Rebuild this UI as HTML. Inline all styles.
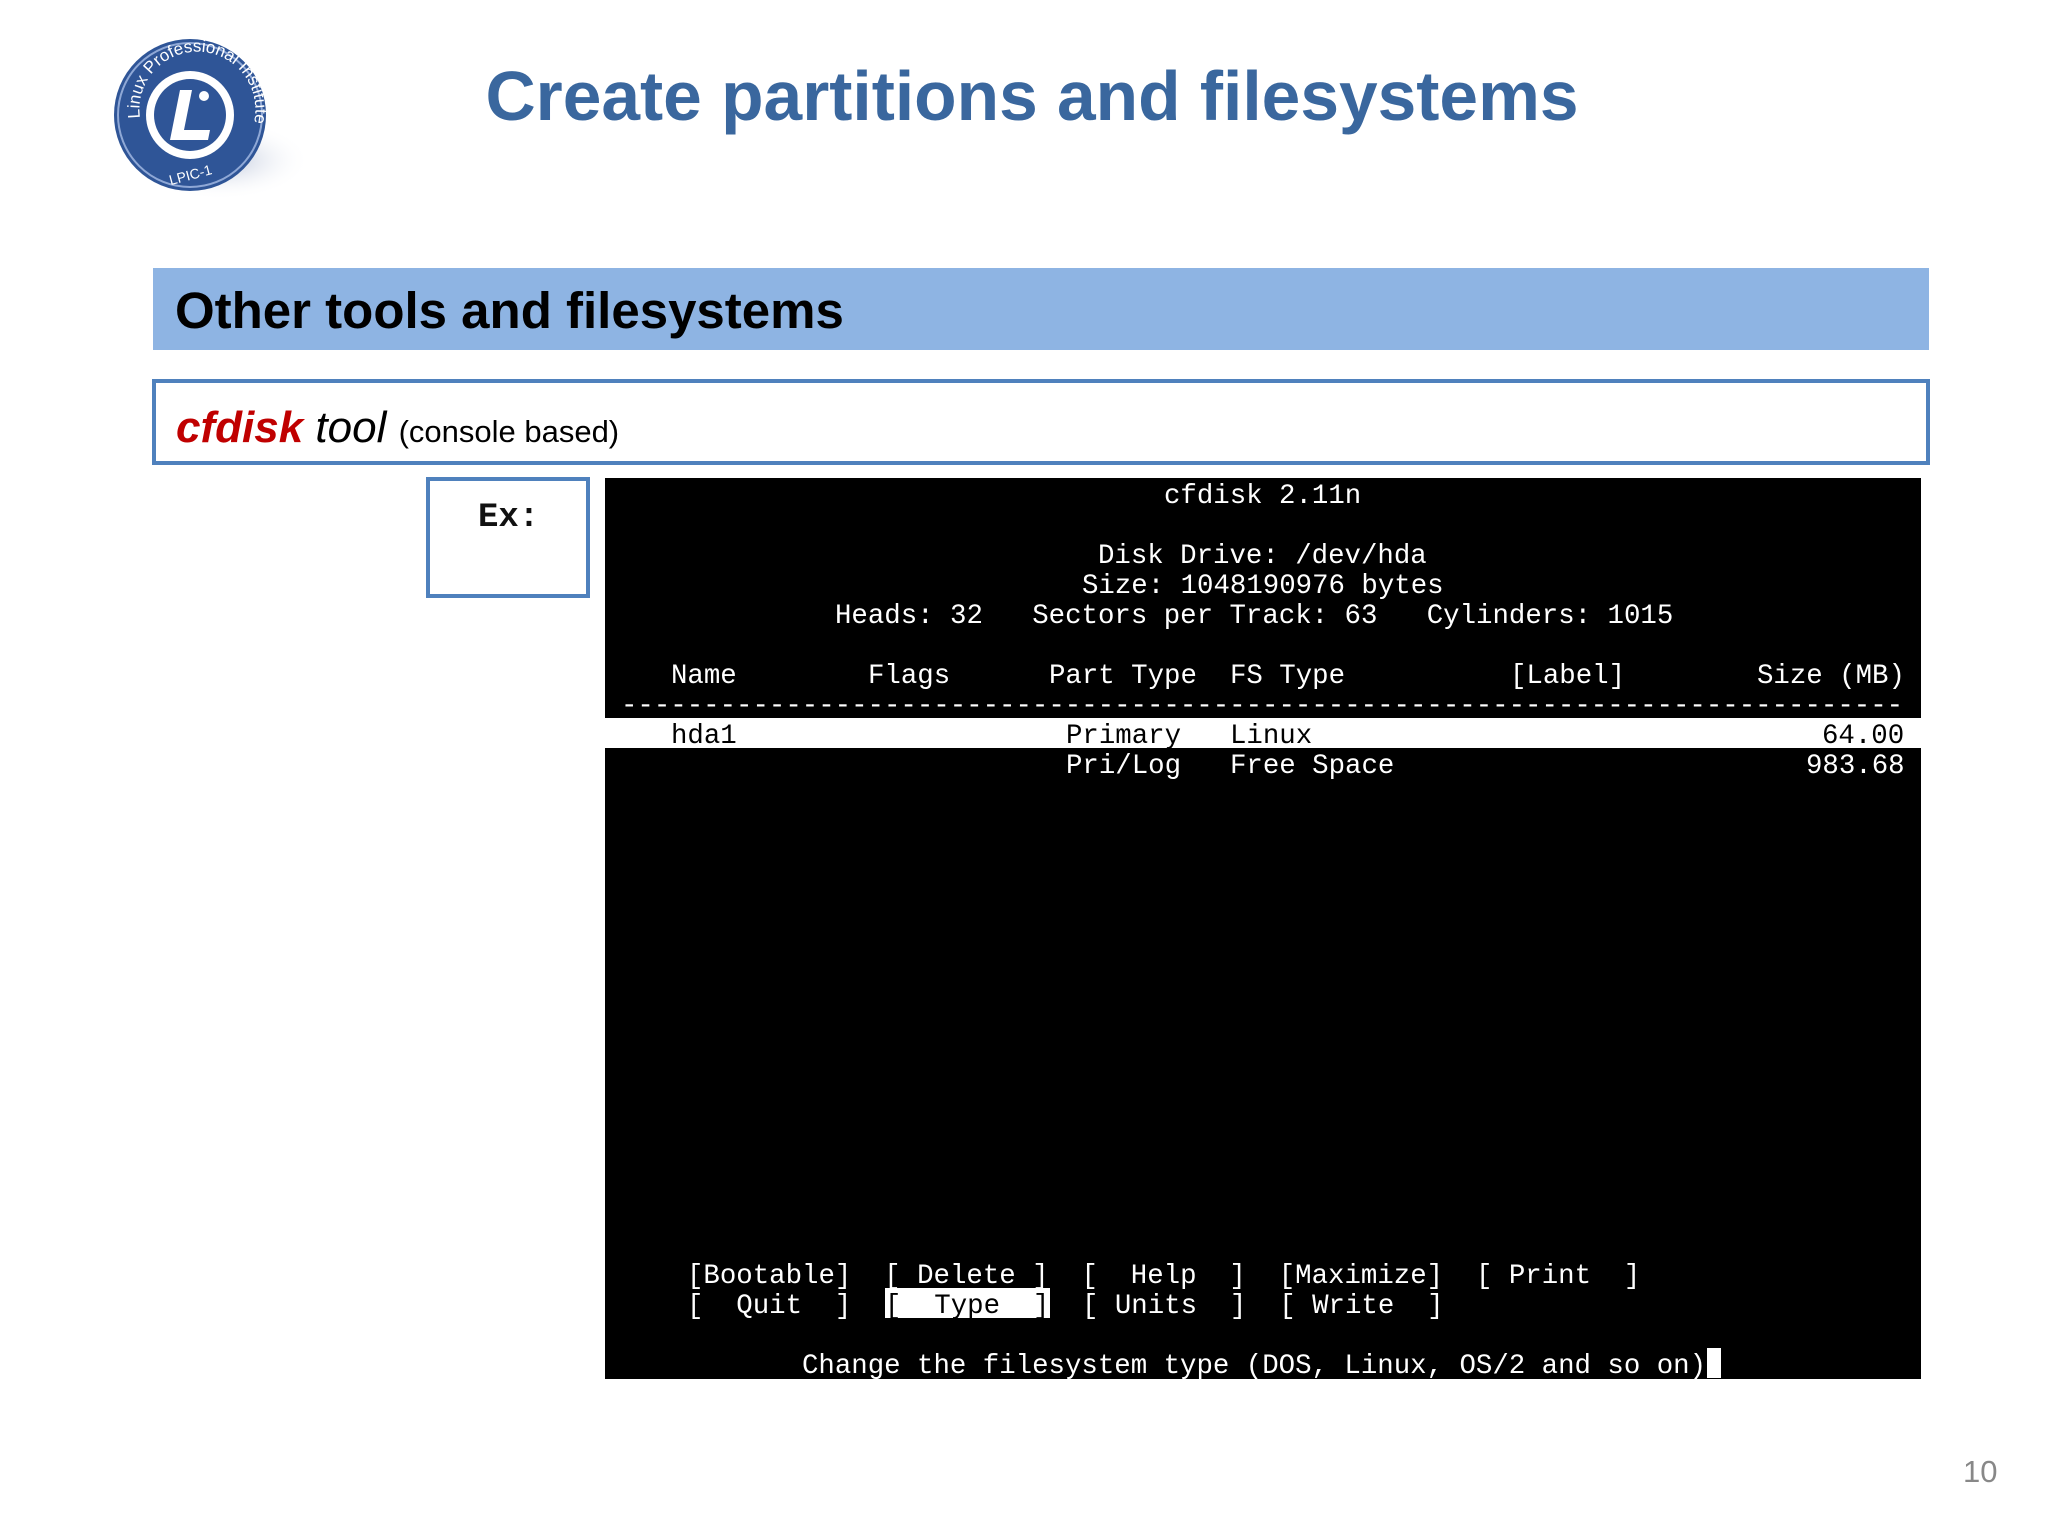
<!DOCTYPE html>
<html><head><meta charset="utf-8"><style>
html,body{margin:0;padding:0}
body{width:2048px;height:1536px;position:relative;background:#fff;overflow:hidden;font-family:"Liberation Sans",sans-serif}
.title{position:absolute;left:0;width:2064px;text-align:center;top:56px;font-size:69.5px;font-weight:bold;color:#3a679e}
.bar{position:absolute;left:153px;top:268px;width:1776px;height:82px;background:#8eb4e3}
.bar span{position:absolute;left:22px;top:13px;font-size:51px;font-weight:bold;color:#000}
.box{position:absolute;left:152px;top:379px;width:1770px;height:78px;border:4px solid #4f81bd}
.box .t{position:absolute;left:20px;top:20px;white-space:nowrap;font-size:44px;font-style:italic}
.ex{position:absolute;left:426px;top:477px;width:156px;height:113px;border:4px solid #4f81bd;box-sizing:content-box}
.ex span{position:absolute;left:48px;top:18px;font:bold 34px "Liberation Mono",monospace;color:#111}
.term{position:absolute;left:605px;top:478px;width:1316px;height:901px;background:#000;color:#fff;font-family:"Liberation Mono",monospace;font-size:27.4px}
.term span{position:absolute;white-space:pre;line-height:30px;height:30px;margin-top:4px}
.hl{position:absolute;background:#fff}
.pn{position:absolute;left:1963px;top:1454px;font-size:31px;color:#888}
</style></head><body>
<svg style="position:absolute;left:100px;top:20px" width="220" height="200" viewBox="0 0 220 200">
<defs><path id="arc" d="M40,98 A58,58 0 1 1 148,118"/><radialGradient id="sh"><stop offset="0" stop-color="#b8c2d8"/><stop offset="1" stop-color="#fff" stop-opacity="0"/></radialGradient></defs>
<ellipse cx="120" cy="140" rx="90" ry="40" fill="url(#sh)"/>
<circle cx="90" cy="95" r="76" fill="#2f5597"/>
<circle cx="90" cy="95" r="72" fill="none" stroke="#8fa8d6" stroke-width="2"/>
<circle cx="90" cy="95" r="44" fill="#fff"/>
<circle cx="90" cy="95" r="36" fill="#2f5597"/>
<path d="M80,70 L92,70 L84,110 L110,110 L108,120 L70,120 Z" fill="#fff"/>
<circle cx="104" cy="76" r="5" fill="#fff"/>
<text font-size="17" font-family="Liberation Sans" fill="#fff"><textPath href="#arc">Linux Professional Institute</textPath></text>
<text x="70" y="160" font-size="14" font-family="Liberation Sans" fill="#fff" transform="rotate(-15 90 160)">LPIC-1</text>
</svg>
<div class="title">Create partitions and filesystems</div>
<div class="bar"><span>Other tools and filesystems</span></div>
<div class="box"><div class="t"><b style="color:#c00000">cfdisk</b> tool <span style="font-style:normal;font-size:31px">(console based)</span></div></div>
<div class="ex"><span>Ex:</span></div>
<div class="term">
<div class="hl" style="left:0;top:240px;width:1316px;height:30px"></div>
<div class="hl" style="left:280px;top:810px;width:165px;height:30px"></div>
<div class="hl" style="left:1102px;top:870px;width:14px;height:30px"></div>
<span style="left:559px;top:0">cfdisk 2.11n</span>
<span style="left:493px;top:60px">Disk Drive: /dev/hda</span>
<span style="left:477px;top:90px">Size: 1048190976 bytes</span>
<span style="left:230px;top:120px">Heads: 32   Sectors per Track: 63   Cylinders: 1015</span>
<span style="left:66px;top:180px">Name</span>
<span style="left:263px;top:180px">Flags</span>
<span style="left:444px;top:180px">Part Type</span>
<span style="left:625px;top:180px">FS Type</span>
<span style="left:905px;top:180px">[Label]</span>
<span style="left:1152px;top:180px">Size (MB)</span>
<span style="left:16px;top:210px">------------------------------------------------------------------------------</span>
<span style="left:66px;top:240px;color:#000">hda1</span>
<span style="left:461px;top:240px;color:#000">Primary</span>
<span style="left:625px;top:240px;color:#000">Linux</span>
<span style="left:1217px;top:240px;color:#000">64.00</span>
<span style="left:461px;top:270px">Pri/Log</span>
<span style="left:625px;top:270px">Free Space</span>
<span style="left:1201px;top:270px">983.68</span>
<span style="left:82px;top:780px">[Bootable]  [ Delete ]  [  Help  ]  [Maximize]  [ Print  ]</span>
<span style="left:82px;top:810px">[  Quit  ]  </span>
<span style="left:280px;top:810px;color:#000">[  Type  ]</span>
<span style="left:477px;top:810px">[ Units  ]  [ Write  ]</span>
<span style="left:197px;top:870px">Change the filesystem type (DOS, Linux, OS/2 and so on)</span>
</div>
<div class="pn">10</div>
</body></html>
